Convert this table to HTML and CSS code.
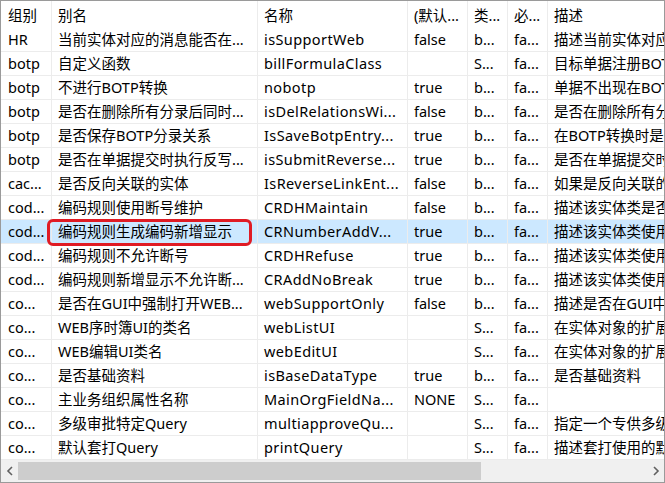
FILE: index.html
```html
<!DOCTYPE html>
<html lang="zh">
<head>
<meta charset="utf-8">
<link rel="stylesheet" href="styles.css">
</head>
<body>
<div class="frame">
  <div class="grid">
    <div class="row head">
      <div class="c">组别</div><div class="c">别名</div><div class="c">名称</div><div class="c">(默认...</div><div class="c">类...</div><div class="c">必...</div><div class="c">描述</div>
    </div>
    <div class="row"><div class="c">HR</div><div class="c">当前实体对应的消息能否在...</div><div class="c">isSupportWeb</div><div class="c">false</div><div class="c">b...</div><div class="c">fa...</div><div class="c">描述当前实体对应的消息能否在Web中使用</div></div>
    <div class="row"><div class="c">botp</div><div class="c">自定义函数</div><div class="c">billFormulaClass</div><div class="c"></div><div class="c">S...</div><div class="c">fa...</div><div class="c">目标单据注册BOTP函数</div></div>
    <div class="row"><div class="c">botp</div><div class="c">不进行BOTP转换</div><div class="c">nobotp</div><div class="c">true</div><div class="c">b...</div><div class="c">fa...</div><div class="c">单据不出现在BOTP中</div></div>
    <div class="row"><div class="c">botp</div><div class="c">是否在删除所有分录后同时...</div><div class="c">isDelRelationsWi...</div><div class="c">false</div><div class="c">b...</div><div class="c">fa...</div><div class="c">是否在删除所有分录后</div></div>
    <div class="row"><div class="c">botp</div><div class="c">是否保存BOTP分录关系</div><div class="c">IsSaveBotpEntry...</div><div class="c">true</div><div class="c">b...</div><div class="c">fa...</div><div class="c">在BOTP转换时是否保存</div></div>
    <div class="row"><div class="c">botp</div><div class="c">是否在单据提交时执行反写...</div><div class="c">isSubmitReverse...</div><div class="c">true</div><div class="c">b...</div><div class="c">fa...</div><div class="c">是否在单据提交时执行</div></div>
    <div class="row"><div class="c">cac...</div><div class="c">是否反向关联的实体</div><div class="c">IsReverseLinkEnt...</div><div class="c">false</div><div class="c">b...</div><div class="c">fa...</div><div class="c">如果是反向关联的实体</div></div>
    <div class="row"><div class="c">cod...</div><div class="c">编码规则使用断号维护</div><div class="c">CRDHMaintain</div><div class="c">false</div><div class="c">b...</div><div class="c">fa...</div><div class="c">描述该实体类是否使用</div></div>
    <div class="row sel"><div class="c">cod...</div><div class="c">编码规则生成编码新增显示</div><div class="c">CRNumberAddV...</div><div class="c">true</div><div class="c">b...</div><div class="c">fa...</div><div class="c">描述该实体类使用编码</div></div>
    <div class="row"><div class="c">cod...</div><div class="c">编码规则不允许断号</div><div class="c">CRDHRefuse</div><div class="c">true</div><div class="c">b...</div><div class="c">fa...</div><div class="c">描述该实体类使用编码</div></div>
    <div class="row"><div class="c">cod...</div><div class="c">编码规则新增显示不允许断...</div><div class="c">CRAddNoBreak</div><div class="c">true</div><div class="c">b...</div><div class="c">fa...</div><div class="c">描述该实体类使用编码</div></div>
    <div class="row"><div class="c">co...</div><div class="c">是否在GUI中强制打开WEB...</div><div class="c">webSupportOnly</div><div class="c">false</div><div class="c">b...</div><div class="c">fa...</div><div class="c">描述是否在GUI中强制</div></div>
    <div class="row"><div class="c">co...</div><div class="c">WEB序时簿UI的类名</div><div class="c">webListUI</div><div class="c"></div><div class="c">S...</div><div class="c">fa...</div><div class="c">在实体对象的扩展属性</div></div>
    <div class="row"><div class="c">co...</div><div class="c">WEB编辑UI类名</div><div class="c">webEditUI</div><div class="c"></div><div class="c">S...</div><div class="c">fa...</div><div class="c">在实体对象的扩展属性</div></div>
    <div class="row"><div class="c">co...</div><div class="c">是否基础资料</div><div class="c">isBaseDataType</div><div class="c">true</div><div class="c">b...</div><div class="c">fa...</div><div class="c">是否基础资料</div></div>
    <div class="row"><div class="c">co...</div><div class="c">主业务组织属性名称</div><div class="c">MainOrgFieldNa...</div><div class="c">NONE</div><div class="c">S...</div><div class="c">fa...</div><div class="c"></div></div>
    <div class="row"><div class="c">co...</div><div class="c">多级审批特定Query</div><div class="c">multiapproveQu...</div><div class="c"></div><div class="c">S...</div><div class="c">fa...</div><div class="c">指定一个专供多级审批</div></div>
    <div class="row"><div class="c">co...</div><div class="c">默认套打Query</div><div class="c">printQuery</div><div class="c"></div><div class="c">S...</div><div class="c">fa...</div><div class="c">描述套打使用的默认</div></div>
  </div>
  <div class="hscroll">
    <div class="arrow"><svg width="8" height="10" viewBox="0 0 8 10"><path d="M6 1 L2 5 L6 9" fill="none" stroke="#606060" stroke-width="1.6"/></svg></div>
    <div class="track"><div class="thumb"></div></div>
    <div class="arrow"><svg width="8" height="10" viewBox="0 0 8 10"><path d="M2 1 L6 5 L2 9" fill="none" stroke="#606060" stroke-width="1.6"/></svg></div>
  </div>
  <div class="mark"></div>
</div>
</body>
</html>
```
FILE: styles.css
```css
html, body {
  margin: 0;
  padding: 0;
  background: #fff;
}
.frame {
  position: relative;
  width: 665px;
  height: 483px;
  box-sizing: border-box;
  border: 1px solid #9a9a9a;
  display: flex;
  flex-direction: column;
  overflow: hidden;
  font-family: "Noto Sans", "Noto Sans CJK SC", sans-serif;
  font-size: 14.5px;
  color: #000;
}
.grid {
  height: 459px;
  overflow: hidden;
}
.row {
  display: grid;
  grid-template-columns: 51px 206px 150px 60px 40px 40px 220px;
  width: 767px;
  height: 24px;
}
.row.head {
  height: 27px;
}
.c {
  box-sizing: border-box;
  border-right: 1px solid #ececec;
  border-bottom: 1px solid #ececec;
  padding-left: 6px;
  white-space: nowrap;
  overflow: hidden;
  line-height: 23px;
}
.c:first-child {
  padding-left: 7px;
}
.row .c:nth-child(3) {
  letter-spacing: 0.4px;
}
.head .c {
  border-bottom: none;
  line-height: 28px;
  letter-spacing: 0;
}
.head .c:nth-child(3) {
  letter-spacing: 0;
}
.row.sel {
  background: #cce8ff;
}
.hscroll {
  height: 22px;
  background: #f0f0f0;
  display: flex;
  align-items: center;
}
.arrow {
  width: 17px;
  height: 22px;
  display: flex;
  align-items: center;
  justify-content: center;
}
.track {
  flex: 1;
  height: 22px;
  display: flex;
  align-items: center;
}
.thumb {
  width: 463px;
  height: 18px;
  background: #cdcdcd;
}
.mark {
  position: absolute;
  left: 46px;
  top: 218px;
  width: 205px;
  height: 27px;
  box-sizing: border-box;
  border: 3px solid #e01b24;
  border-radius: 6px;
}
```
